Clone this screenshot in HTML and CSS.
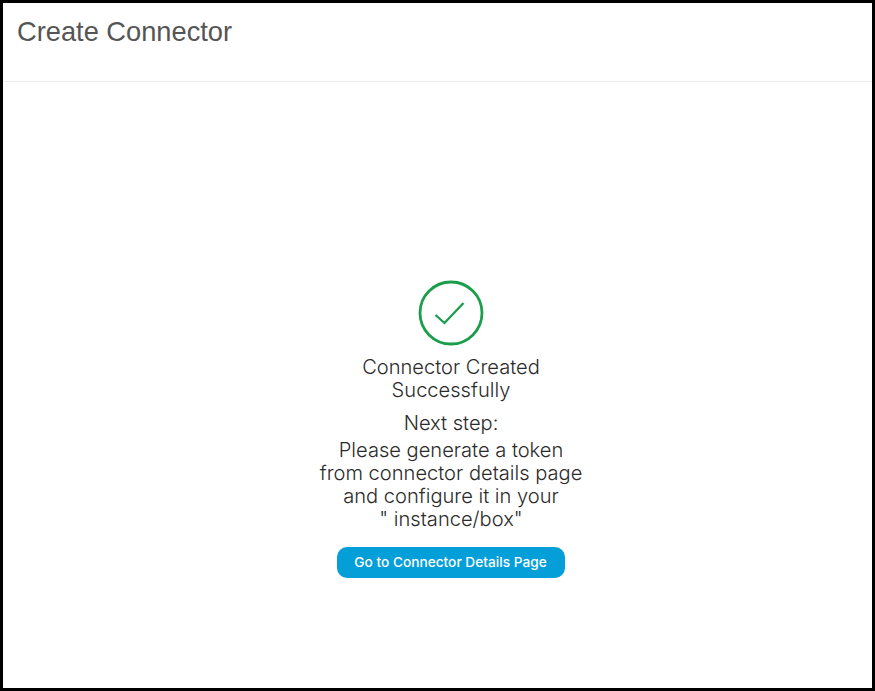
FILE: index.html
```html
<!DOCTYPE html>
<html lang="en">

<head>
    <meta charset="UTF-8">
    <title>Create Connector</title>
    <link rel="stylesheet" href="styles.css">
</head>

<body>
    <div class="frame">
        <div class="header">
            <h1>Create Connector</h1>
        </div>
        <div class="content">
            <svg class="check" width="66" height="66" viewBox="0 0 66 66">
                <circle cx="33" cy="33" r="31" fill="none" stroke="#1b9e4b" stroke-width="2.800"/>
                <path d="M17.500 35 L26.500 43 L45.500 23" fill="none" stroke="#1b9e4b" stroke-width="2.300"/>
            </svg>
            <p class="title">Connector Created<br>Successfully</p>
            <p class="next">Next step:</p>
            <p class="info">Please generate a token<br>from connector details page<br>and configure it in your<br>" instance/box"</p>
            <a class="btn" href="javascript:;">Go to Connector Details Page</a>
        </div>
    </div>
</body>

</html>
```

FILE: styles.css
```css
html,
body {
    margin: 0;
    height: 100%;
}

body {
    font-family: "Inter", "Liberation Sans", sans-serif;
    background-color: #fff;
}

.frame {
    box-sizing: border-box;
    display: flex;
    flex-direction: column;
    width: 875px;
    height: 691px;
    border: 3px solid #000;
}

.header {
    box-sizing: border-box;
    height: 79px;
    padding: 12px 14px 0;
    border-bottom: 1px solid #ececec;
}

.header h1 {
    margin: 0;
    font-family: "Liberation Sans", sans-serif;
    font-size: 27.250px;
    font-weight: 400;
    line-height: 34px;
    color: #555;
}

.content {
    display: flex;
    flex-direction: column;
    align-items: center;
    padding-top: 198px;
    padding-left: 28px;
    text-align: center;
    font-size: 20.100px;
    font-weight: 300;
    line-height: 23px;
    color: #2b2b2b;
}

.check {
    display: block;
    margin-left: -1px;
}

.content p {
    margin: 0;
    transform: translateX(-0.500px);
}

.content .title {
    margin-top: 10px;
}

.content .next {
    margin-top: 10px;
}

.content .info {
    margin-top: 4px;
}

.btn {
    display: block;
    width: 228px;
    height: 31px;
    margin-top: 16px;
    margin-left: -2px;
    border-radius: 10px;
    background-color: #049fd9;
    color: #fff;
    font-family: "Inter", "Liberation Sans", sans-serif;
    font-size: 13.700px;
    font-weight: 500;
    line-height: 31px;
    text-decoration: none;
}
```
